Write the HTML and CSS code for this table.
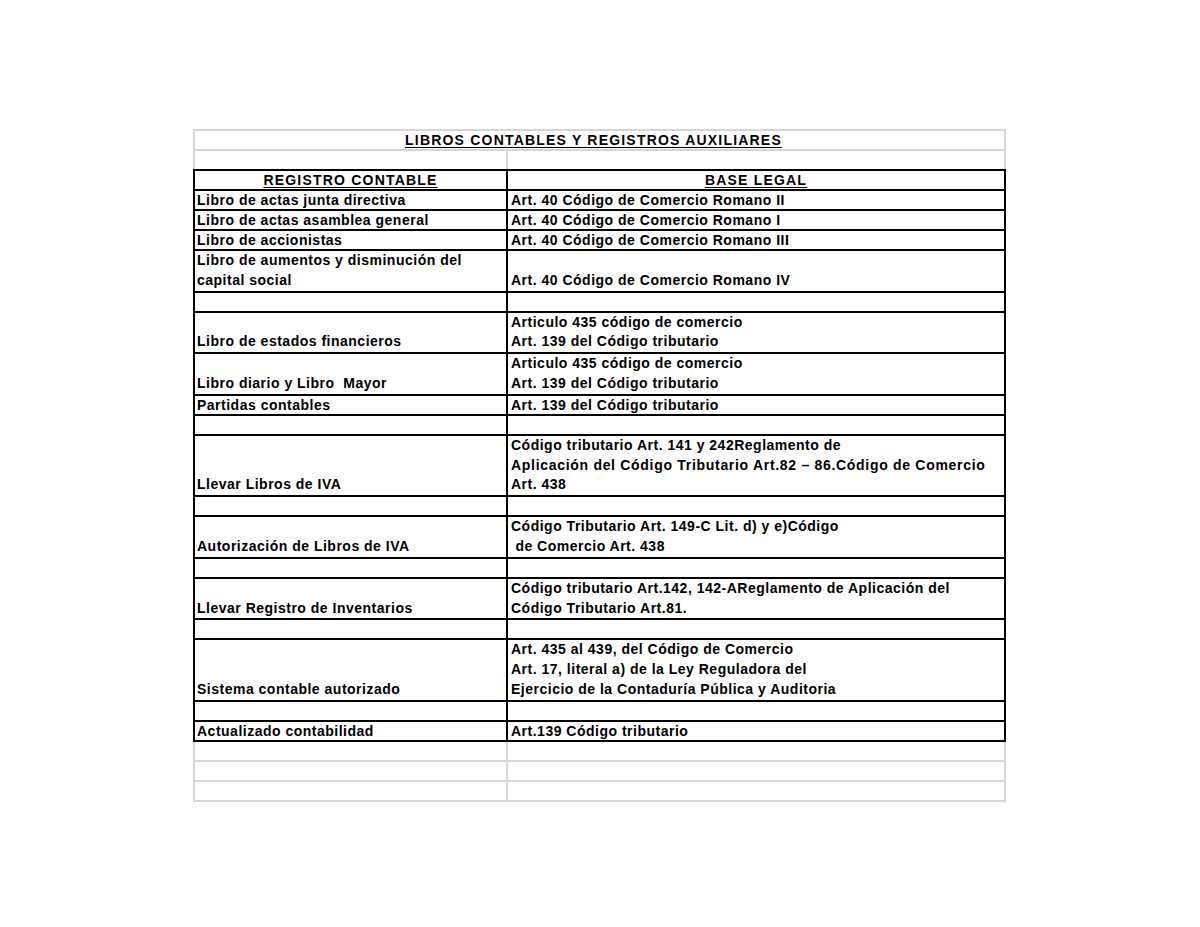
FILE: index.html
```html
<!DOCTYPE html>
<html lang="es">
<head>
<meta charset="utf-8">
<title>Libros contables y registros auxiliares</title>
<link rel="stylesheet" href="styles.css">
</head>
<body>
<div class="page">
<table class="sheet">
  <colgroup><col class="c1"><col class="c2"></colgroup>
  <tr class="r1"><td class="g title" colspan="2"><span class="u caps">LIBROS CONTABLES Y REGISTROS AUXILIARES</span></td></tr>
  <tr class="r1"><td class="g gb">&nbsp;</td><td class="g gb">&nbsp;</td></tr>
  <tr class="r1"><td class="b head"><span class="u caps">REGISTRO CONTABLE</span></td><td class="b head"><span class="u caps">BASE LEGAL</span></td></tr>
  <tr class="r1"><td class="b">Libro de actas junta directiva</td><td class="b">Art. 40 Código de Comercio Romano II</td></tr>
  <tr class="r1"><td class="b">Libro de actas asamblea general</td><td class="b">Art. 40 Código de Comercio Romano I</td></tr>
  <tr class="r1"><td class="b">Libro de accionistas</td><td class="b">Art. 40 Código de Comercio Romano III</td></tr>
  <tr class="rm"><td class="b">Libro de aumentos y disminución del<br>capital social</td><td class="b">Art. 40 Código de Comercio Romano IV</td></tr>
  <tr class="r1"><td class="b">&nbsp;</td><td class="b">&nbsp;</td></tr>
  <tr class="rm"><td class="b">Libro de estados financieros</td><td class="b">Articulo 435 código de comercio<br>Art. 139 del Código tributario</td></tr>
  <tr class="rm"><td class="b">Libro diario y Libro&nbsp; Mayor</td><td class="b">Articulo 435 código de comercio<br>Art. 139 del Código tributario</td></tr>
  <tr class="r1"><td class="b">Partidas contables</td><td class="b">Art. 139 del Código tributario</td></tr>
  <tr class="r1"><td class="b">&nbsp;</td><td class="b">&nbsp;</td></tr>
  <tr class="rm"><td class="b">Llevar Libros de IVA</td><td class="b">Código tributario Art. 141 y 242Reglamento de<br><span class="wide">Aplicación del Código Tributario Art.82 – 86.Código de Comercio</span><br>Art. 438</td></tr>
  <tr class="r1"><td class="b">&nbsp;</td><td class="b">&nbsp;</td></tr>
  <tr class="rm"><td class="b">Autorización de Libros de IVA</td><td class="b">Código Tributario Art. 149-C Lit. d) y e)Código<br>&nbsp;de Comercio Art. 438</td></tr>
  <tr class="r1"><td class="b">&nbsp;</td><td class="b">&nbsp;</td></tr>
  <tr class="rm"><td class="b">Llevar Registro de Inventarios</td><td class="b">Código tributario Art.142, 142-AReglamento de Aplicación del<br>Código Tributario Art.81.</td></tr>
  <tr class="r1"><td class="b">&nbsp;</td><td class="b">&nbsp;</td></tr>
  <tr class="rm"><td class="b">Sistema contable autorizado</td><td class="b">Art. 435 al 439, del Código de Comercio<br>Art. 17, literal a) de la Ley Reguladora del<br>Ejercicio de la Contaduría Pública y Auditoria</td></tr>
  <tr class="r1"><td class="b">&nbsp;</td><td class="b">&nbsp;</td></tr>
  <tr class="r1"><td class="b">Actualizado contabilidad</td><td class="b">Art.139 Código tributario</td></tr>
  <tr class="r1"><td class="g">&nbsp;</td><td class="g">&nbsp;</td></tr>
  <tr class="r1"><td class="g">&nbsp;</td><td class="g">&nbsp;</td></tr>
  <tr class="r1"><td class="g">&nbsp;</td><td class="g">&nbsp;</td></tr>
</table>
</div>
</body>
</html>
```

FILE: styles.css
```css
html, body {
  margin: 0;
  padding: 0;
  background: #ffffff;
}

.page {
  padding: 129px 0 0 193px;
}

.sheet {
  border-collapse: collapse;
  table-layout: fixed;
  width: 811px;
  font-family: "Liberation Sans", Arial, Helvetica, sans-serif;
  font-weight: bold;
  font-size: 14px;
  letter-spacing: 0.5px;
  color: #000000;
}

.c1 { width: 313px; }
.c2 { width: 498px; }

.sheet td {
  padding: 0 0 0 2px;
  vertical-align: bottom;
  white-space: nowrap;
  overflow: hidden;
  height: 0;
}

.sheet td + td {
  padding-left: 3px;
}

.r1 td { line-height: 18px; }
.rm td { line-height: 19.8px; }

.g {
  border: 2px solid #d6d6d6;
}

.gb {
  border-bottom-color: #000000;
}

.b {
  border: 2px solid #000000;
}

.sheet .title,
.sheet .head {
  text-align: center;
  padding-left: 0;
}

.title .caps {
  margin-right: 12px;
}

.caps {
  letter-spacing: 1.2px;
}

.u {
  text-decoration: underline;
  text-decoration-thickness: 1px;
  text-underline-offset: 2px;
}

.wide {
  letter-spacing: 0.7px;
}
```
